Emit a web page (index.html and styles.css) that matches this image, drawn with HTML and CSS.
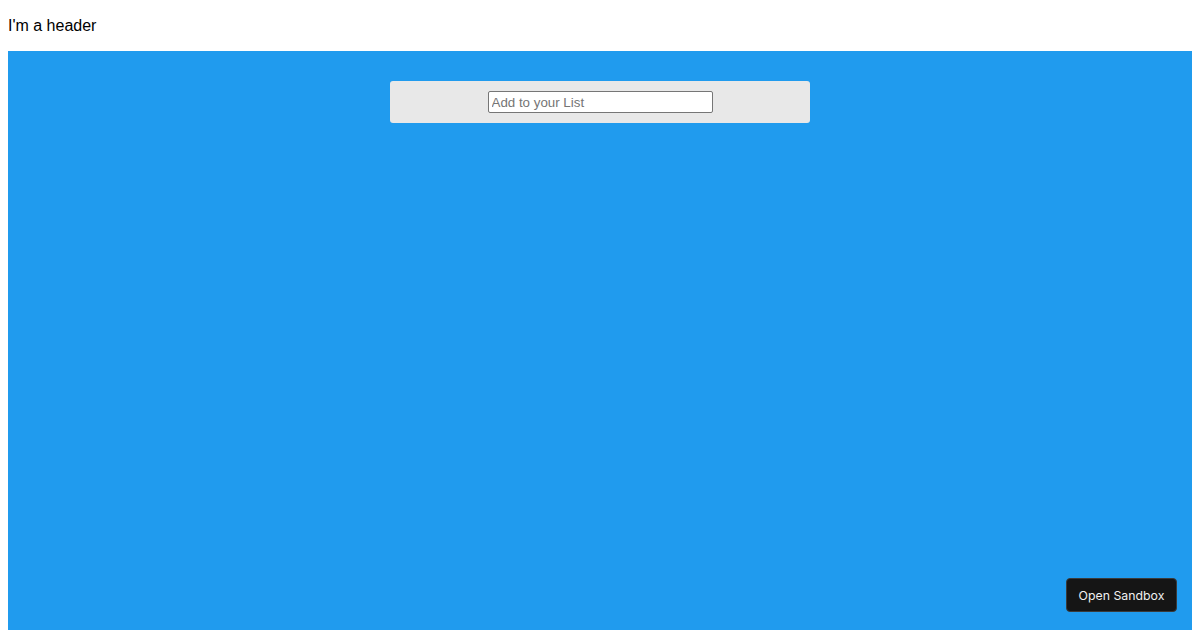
FILE: index.html
```html
<!DOCTYPE html>
<html>
<head>
<meta charset="utf-8">
<link rel="stylesheet" href="styles.css">
</head>
<body>
<div class="page">
  <header class="header"><p class="header-text">I'm a header</p></header>
  <main class="stage">
    <div class="panel">
      <input class="list-input" type="text" placeholder="Add to your List">
    </div>
  </main>
</div>
<a class="sandbox-btn" href="#">Open Sandbox</a>
</body>
</html>
```

FILE: styles.css
```css
html, body {
  background: #fff;
  margin: 0;
  padding: 0;
}
body {
  font-family: "Liberation Sans", Arial, sans-serif;
  font-size: 16px;
  color: #000;
}
.page {
  padding: 0 8px;
}
.header {
  padding: 16px 0 16px;
}
.header-text {
  margin: 0;
  line-height: 19px;
}
.stage {
  background: #209bee;
  height: 579px;
  padding-top: 30px;
  box-sizing: border-box;
}
.panel {
  width: 420px;
  margin: 0 auto;
  background: #e8e8e8;
  border-radius: 3px;
  padding: 10px 0;
  display: flex;
  justify-content: center;
}
.list-input {
  width: 225px;
  height: 22px;
  box-sizing: border-box;
  font-family: "Liberation Sans", Arial, sans-serif;
  font-size: 13.33px;
  padding: 1px 3px;
  border: 1px solid #767676;
  border-radius: 2px;
  background: #fff;
  margin: 0;
}
.list-input::placeholder {
  color: #757575;
}
.sandbox-btn {
  position: fixed;
  right: 23px;
  bottom: 18px;
  width: 111px;
  height: 34px;
  box-sizing: border-box;
  display: flex;
  align-items: center;
  justify-content: center;
  background: #151515;
  border: 1px solid #3a3a3a;
  border-radius: 4px;
  color: #f0f0f0;
  font-family: Inter, "Liberation Sans", sans-serif;
  font-size: 12.3px;
  text-decoration: none;
}
```
